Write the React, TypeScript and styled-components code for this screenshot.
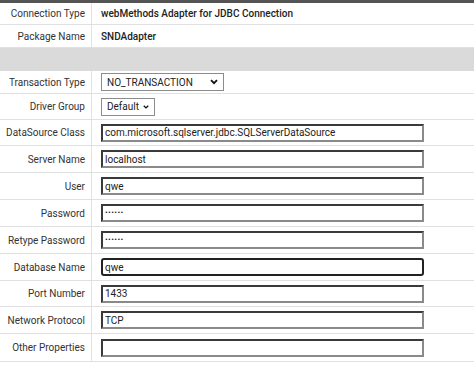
import React from 'react'
import styled, { createGlobalStyle } from 'styled-components'

const Global = createGlobalStyle`
  html, body { margin: 0; padding: 0; background: #ffffff; }
  body { font-family: Roboto, "Liberation Sans", sans-serif; }
`

const Page = styled.div`
  width: 474px;
  height: 374px;
  background: #fff;
  overflow: hidden;
`

const TopBar = styled.div`
  height: 3px;
  background: #545454;
`

const Row = styled.div<{ h: number }>`
  display: grid;
  grid-template-columns: 92px 1fr;
  height: ${p => p.h}px;
  border-bottom: 1px solid #e0e0e0;
  box-sizing: border-box;
`

const Band = styled.div`
  height: 23px;
  background: #dadada;
`

const Label = styled.div`
  display: flex;
  align-items: center;
  justify-content: flex-end;
  padding-right: 6px;
  border-right: 1px solid #e2e2e2;
  font-size: 10px;
  color: #333;
  white-space: nowrap;
`

const Value = styled.div`
  display: flex;
  align-items: center;
  padding-left: 9px;
  font-size: 10px;
  font-weight: 500;
  color: #222;
  white-space: nowrap;
`

const Field = styled.div<{ focused?: boolean }>`
  box-sizing: border-box;
  width: 323px;
  height: 18px;
  display: flex;
  align-items: center;
  padding-left: 2px;
  font-size: 10px;
  font-weight: 400;
  color: #222;
  background: #fff;
  border-top: 2px solid ${p => (p.focused ? '#222' : '#3a3a3a')};
  border-left: 2px solid ${p => (p.focused ? '#222' : '#3a3a3a')};
  border-right: 2px solid ${p => (p.focused ? '#222' : '#8a8a8a')};
  border-bottom: 2px solid ${p => (p.focused ? '#222' : '#8a8a8a')};
  border-radius: ${p => (p.focused ? '3px' : '0')};
`

const Dots = styled.span`
  font-size: 8px;
  letter-spacing: 0.4px;
  line-height: 1;
`

const Select = styled.div<{ w: number }>`
  box-sizing: border-box;
  width: ${p => p.w}px;
  height: 18px;
  display: flex;
  align-items: center;
  justify-content: space-between;
  gap: 4px;
  padding: 0 5px 0 5px;
  border: 1px solid #8c8c8c;
  font-size: 10px;
  font-weight: 400;
  color: #222;
  background: #fff;
`

const Chevron = () => (
  <svg width="8" height="6" viewBox="0 0 8 6">
    <path d="M1 1.2 L4 4.2 L7 1.2" fill="none" stroke="#111" strokeWidth="1.8" />
  </svg>
)

const fields: { label: string; value: string; kind?: 'pw' | 'focus'; h: number }[] = [
  { label: 'DataSource Class', value: 'com.microsoft.sqlserver.jdbc.SQLServerDataSource', h: 26 },
  { label: 'Server Name', value: 'localhost', h: 27 },
  { label: 'User', value: 'qwe', h: 27 },
  { label: 'Password', value: '••••••', kind: 'pw', h: 27 },
  { label: 'Retype Password', value: '••••••', kind: 'pw', h: 27 },
  { label: 'Database Name', value: 'qwe', kind: 'focus', h: 27 },
  { label: 'Port Number', value: '1433', h: 26 },
  { label: 'Network Protocol', value: 'TCP', h: 27 },
  { label: 'Other Properties', value: '', h: 28 },
]

export default function App() {
  return (
    <Page>
      <Global />
      <TopBar />
      <Row h={22}>
        <Label>Connection Type</Label>
        <Value>webMethods Adapter for JDBC Connection</Value>
      </Row>
      <Row h={23}>
        <Label>Package Name</Label>
        <Value>SNDAdapter</Value>
      </Row>
      <Band />
      <Row h={23}>
        <Label>Transaction Type</Label>
        <Value>
          <Select w={123}>
            NO_TRANSACTION
            <Chevron />
          </Select>
        </Value>
      </Row>
      <Row h={26}>
        <Label>Driver Group</Label>
        <Value>
          <Select w={54}>
            Default
            <Chevron />
          </Select>
        </Value>
      </Row>
      {fields.map(f => (
        <Row key={f.label} h={f.h}>
          <Label>{f.label}</Label>
          <Value>
            <Field focused={f.kind === 'focus'}>
              {f.kind === 'pw' ? <Dots>{f.value}</Dots> : f.value}
            </Field>
          </Value>
        </Row>
      ))}
    </Page>
  )
}
